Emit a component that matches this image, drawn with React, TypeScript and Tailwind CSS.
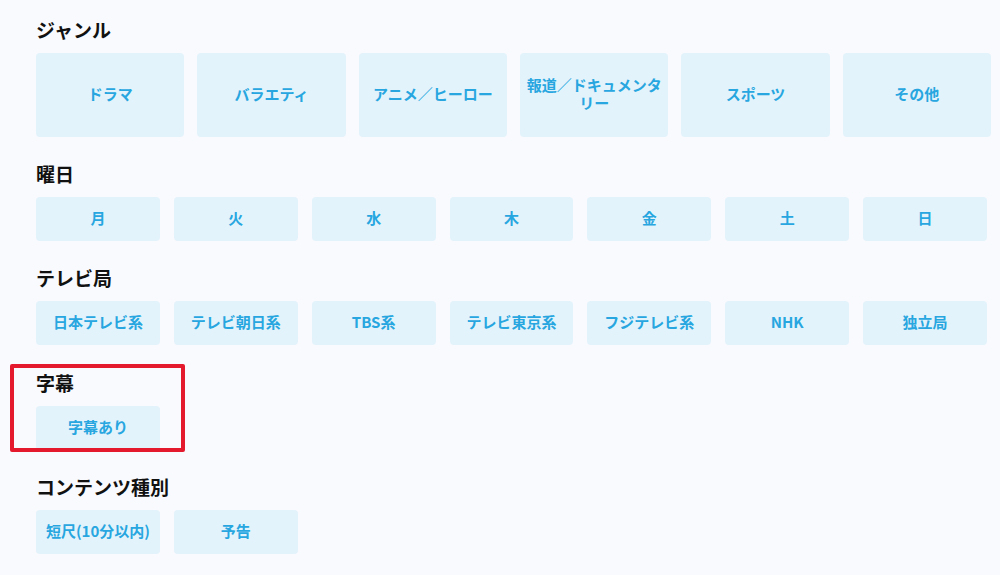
import React from "react";

const genres = ["ドラマ", "バラエティ", "アニメ／ヒーロー", "報道／ドキュメンタリー", "スポーツ", "その他"];
const days = ["月", "火", "水", "木", "金", "土", "日"];
const stations = ["日本テレビ系", "テレビ朝日系", "TBS系", "テレビ東京系", "フジテレビ系", "NHK", "独立局"];

function Btn({ label, tall }: { label: string; tall?: boolean }) {
  return (
    <div
      className={
        "flex items-center justify-center rounded-[4px] bg-[#e3f3fb] px-[6px] pb-[2px] text-center text-[15px] font-bold leading-[18px] text-[#27a6e0] " +
        (tall ? "h-[84px]" : "h-[44px]")
      }
    >
      {label}
    </div>
  );
}

function Heading({ children }: { children: React.ReactNode }) {
  return <h2 className="mb-[9px] text-[19px] font-bold leading-[28px] text-[#111111]">{children}</h2>;
}

export default function App() {
  return (
    <div
      className="min-h-[575px] w-[1000px] bg-[#f8fafd] pl-[36px] pt-[16px]"
      style={{ fontFamily: '"Noto Sans CJK JP", "Noto Sans", sans-serif' }}
    >
      <section>
        <Heading>ジャンル</Heading>
        <div className="grid w-[955px] grid-cols-6 gap-[13px]">
          {genres.map((g) => (
            <Btn key={g} label={g} tall />
          ))}
        </div>
      </section>

      <section className="mt-[23px] w-[951px]">
        <Heading>曜日</Heading>
        <div className="grid grid-cols-7 gap-[14px]">
          {days.map((d) => (
            <Btn key={d} label={d} />
          ))}
        </div>
      </section>

      <section className="mt-[23px] w-[951px]">
        <Heading>テレビ局</Heading>
        <div className="grid grid-cols-7 gap-[14px]">
          {stations.map((s) => (
            <Btn key={s} label={s} />
          ))}
        </div>
      </section>

      <section className="relative mt-[24px] w-[951px]">
        <Heading>字幕</Heading>
        <div className="grid grid-cols-7 gap-[14px]">
          <Btn label="字幕あり" />
        </div>
        <div className="pointer-events-none absolute left-[-26px] top-[-5px] h-[88px] w-[175px] rounded-[2px] border-[4px] border-[#e5192d]" />
      </section>

      <section className="mt-[23px] w-[951px]">
        <Heading>コンテンツ種別</Heading>
        <div className="grid grid-cols-7 gap-[14px]">
          <Btn label="短尺(10分以内)" />
          <Btn label="予告" />
        </div>
      </section>
    </div>
  );
}
